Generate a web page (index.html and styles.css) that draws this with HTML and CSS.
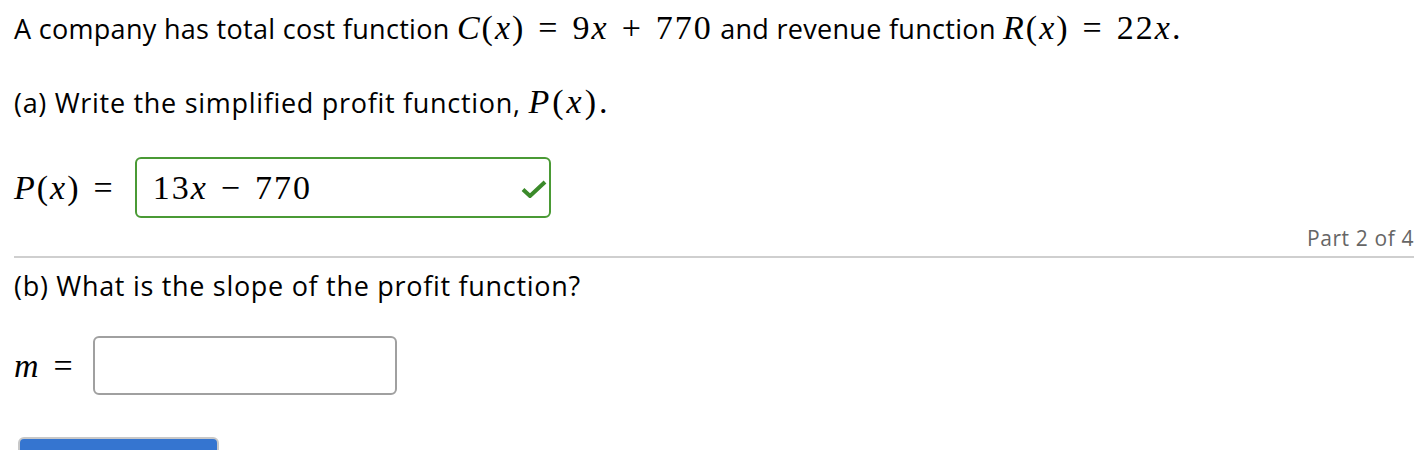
FILE: index.html
```html
<!DOCTYPE html>
<html lang="en">
<head>
<meta charset="UTF-8">
<title>Profit Function</title>
<link rel="stylesheet" href="styles.css">
</head>
<body>
<div class="question">
  <p class="intro">A company has total cost function <span class="math"><i>C</i>(<i>x</i>)<span class="op">=</span>9<i>x</i><span class="op">+</span>770</span> and revenue function <span class="math"><i>R</i>(<i>x</i>)<span class="op">=</span>22<i>x</i>.</span></p>

  <p class="part-title">(a) Write the simplified profit function, <span class="math"><i>P</i>(<i>x</i>).</span></p>

  <div class="answer-row">
    <span class="math label"><i>P</i>(<i>x</i>)<span class="op">=</span></span>
    <div class="answer-box correct">
      <span class="math">13<i>x</i><span class="op">&minus;</span>770</span>
      <svg class="check" width="26" height="18" viewBox="0 0 26 18"><path d="M2 9.5 L9 16 L24 2" fill="none" stroke="#3b8a2a" stroke-width="4"/></svg>
    </div>
  </div>

  <div class="part-divider"><span>Part 2 of 4</span></div>

  <p class="part-title b">(b) What is the slope of the profit function?</p>

  <div class="answer-row m-row">
    <span class="math label"><i>m</i><span class="op">=</span></span>
    <div class="answer-box empty"></div>
  </div>

  <button class="btn-submit">Submit</button>
</div>
</body>
</html>
```

FILE: styles.css
```css
*{margin:0;padding:0;box-sizing:border-box;}
html,body{height:100%;overflow:hidden;}
body{font-family:"Open Sans",sans-serif;font-size:27px;letter-spacing:0.3px;color:#000;background:#fff;}
.question{padding:0 12px 0 14px;}
.math{font-family:"Liberation Serif",serif;font-size:34px;letter-spacing:2px;white-space:nowrap;}
.math i{font-style:italic;}
.op{margin:0 13px;}
.intro{padding-top:8px;line-height:40px;}
.part-title{margin-top:33px;line-height:40px;letter-spacing:0.7px;}
.part-title .math{letter-spacing:3px;}
.answer-row{display:flex;align-items:center;margin-top:34px;}
.label{margin-right:2px;}
.label .op{margin-right:18px;}
.answer-box{display:flex;align-items:center;justify-content:space-between;border-radius:6px;height:61px;background:#fff;}
.answer-box.correct{width:416px;border:2px solid #4a9a35;padding:0 2px 0 16px;}
.answer-box.empty{width:304px;height:59px;border:2px solid #a0a0a0;}
.check{margin-top:2px;}
.part-divider{margin-top:6px;border-bottom:2px solid #cfcfcf;text-align:right;font-size:21px;letter-spacing:0.6px;color:#666;line-height:28px;padding-bottom:4px;}
.part-title.b{margin-top:8px;}
.m-row{margin-top:30px;}
.m-row .label .op{margin-right:16px;}
.btn-submit{display:block;margin:42px 0 0 4px;width:201px;height:40px;background:#3575d0;border:2px solid #c8c8c8;border-radius:6px;color:#fff;font-size:20px;font-family:"Open Sans",sans-serif;}
```
